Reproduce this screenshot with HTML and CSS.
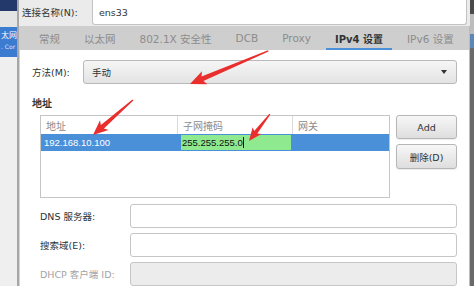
FILE: index.html
```html
<!DOCTYPE html>
<html lang="zh-CN">
<head>
  <meta charset="UTF-8">
  <meta name="viewport" content="width=device-width, initial-scale=1.0">
  <title>编辑 ens33</title>
  <link rel="stylesheet" href="styles.css">
</head>
<body>

  <div class="screen">
      <div class="side-left">
          <div class="side-top"></div>
          <div class="side-gap"></div>
          <div class="side-item">
              <span class="side-title">太网</span>
              <span class="side-sub">. Cor</span>
          </div>
      </div>

      <div class="dialog">
          <div class="name-row">
              <label class="name-label">连接名称(N):</label>
              <div class="name-entry">ens33</div>
          </div>

          <div class="tabs">
              <span class="tab">常规</span>
              <span class="tab">以太网</span>
              <span class="tab">802.1X 安全性</span>
              <span class="tab">DCB</span>
              <span class="tab">Proxy</span>
              <span class="tab active">IPv4 设置</span>
              <span class="tab">IPv6 设置</span>
          </div>

          <div class="page">
              <div class="method-row">
                  <label class="method-label">方法(M):</label>
                  <div class="combo">
                      <span>手动</span>
                      <span class="combo-caret"></span>
                  </div>
              </div>

              <div class="section-title">地址</div>

              <div class="addr-block">
                  <div class="addr-table">
                      <div class="addr-head">
                          <div class="col col1">地址</div>
                          <div class="col col2">子网掩码</div>
                          <div class="col col3">网关</div>
                      </div>
                      <div class="addr-row selected">
                          <div class="col col1">192.168.10.100</div>
                          <div class="col col2"><span class="cell-edit">255.255.255.0<span class="caret"></span></span></div>
                          <div class="col col3"></div>
                      </div>
                  </div>
                  <div class="addr-buttons">
                      <button type="button" class="btn">Add</button>
                      <button type="button" class="btn btn-tall">删除(D)</button>
                  </div>
              </div>

              <div class="form-rows">
                  <div class="form-row">
                      <label>DNS 服务器:</label>
                      <div class="entry"></div>
                  </div>
                  <div class="form-row">
                      <label>搜索域(E):</label>
                      <div class="entry"></div>
                  </div>
                  <div class="form-row">
                      <label class="disabled">DHCP 客户端 ID:</label>
                      <div class="entry disabled"></div>
                  </div>
              </div>
          </div>
      </div>

      <div class="side-right">
          <div class="sr-dark"></div>
          <div class="sr-light"></div>
          <div class="sr-blue"></div>
          <div class="sr-rest"></div>
      </div>

      <!-- red annotation arrows drawn over the dialog -->
      <svg class="arrows" width="474" height="286" viewBox="0 0 474 286">
          <g fill="#ea2e2e">
              <polygon transform="translate(190 84) rotate(-22.9)" points="0,0 16,-7 13.5,-2.4 85,-0.7 85,0.7 13.5,2.4 16,7"/>
              <polygon transform="translate(93 135) rotate(-41.2)" points="0,0 15,-6.5 12.5,-2.3 53,-0.7 53,0.7 12.5,2.3 15,6.5"/>
              <polygon transform="translate(249 141) rotate(-52.1)" points="0,0 13,-5.5 11,-2 34,-0.6 34,0.6 11,2 13,5.5"/>
          </g>
      </svg>
  </div>

</body>
</html>
```

FILE: styles.css
```css
* {
  box-sizing: border-box;
}

body {
  margin: 0;
  width: 474px;
  height: 286px;
  overflow: hidden;
  font-family: "DejaVu Sans", "Noto Sans CJK SC", sans-serif;
  font-size: 9.5px;
  color: #2e3436;
  background: #efefef;
}

.screen {
  position: relative;
  display: flex;
  height: 286px;
}

/* window list behind the dialog */
.side-left {
  width: 17px;
  display: flex;
  flex-direction: column;
  background: #efefef;
  overflow: hidden;
}

.side-top {
  height: 11px;
  background: #23396b;
}

.side-gap {
  height: 16px;
  background: #e4e4e4;
}

.side-item {
  height: 30px;
  background: #3b7bd0;
  color: #fff;
  display: flex;
  flex-direction: column;
  padding-top: 2px;
}

.side-title {
  font-size: 8px;
  line-height: 13px;
  white-space: nowrap;
  padding-left: 1px;
}

.side-sub {
  font-size: 6px;
  line-height: 10px;
  white-space: nowrap;
  padding-left: 1px;
  color: #d8e6f8;
}

.side-right {
  width: 4px;
  display: flex;
  flex-direction: column;
  background: #5c5c5c;
}

.sr-dark {
  height: 14px;
  background: #4a4a4a;
}

.sr-light {
  height: 20px;
  background: #bdbdbd;
}

.sr-blue {
  height: 14px;
  background: #5d86b6;
}

.sr-rest {
  flex: 1;
  background: #6a6a6a;
}

/* dialog */
.dialog {
  flex: 1;
  display: flex;
  flex-direction: column;
  border-left: 2px solid #a7a7a7;
  background: #ebebeb;
}

.name-row {
  height: 30px;
  display: flex;
  align-items: flex-start;
  padding: 0 3px 0 3px;
}

.name-label {
  width: 70px;
  line-height: 25px;
}

.name-entry {
  flex: 1;
  height: 25px;
  background: #fff;
  border: 1px solid #c3c3c3;
  border-top: 0;
  border-radius: 0 0 3px 3px;
  padding-left: 6px;
  display: flex;
  align-items: center;
}

.tabs {
  height: 27px;
  background: #cecece;
  display: flex;
  padding-left: 8px;
  border-right: 1px solid #bcbcbc;
}

.tab {
  position: relative;
  padding: 0 12px;
  display: flex;
  align-items: center;
  color: #8c8c8c;
  font-size: 10.5px;
  white-space: nowrap;
}

.tab.active {
  color: #2e3436;
  font-weight: bold;
  font-size: 10px;
}

.tab.active::after {
  content: "";
  position: absolute;
  left: 3px;
  right: 3px;
  bottom: 0;
  height: 2px;
  background: #4a90d9;
}

.page {
  flex: 1;
  background: #fff;
  border-left: 1px solid #d4d4d4;
  border-right: 1px solid #bcbcbc;
  padding: 10px 12px 0 12px;
  display: flex;
  flex-direction: column;
}

.method-row {
  display: flex;
  align-items: center;
  height: 24px;
}

.method-label {
  width: 51px;
}

.combo {
  flex: 1;
  height: 24px;
  border: 1px solid #b9b9b9;
  border-radius: 3px;
  background: linear-gradient(#f6f6f6, #e3e3e3);
  display: flex;
  align-items: center;
  justify-content: space-between;
  padding: 0 9px 0 8px;
}

.combo-caret {
  width: 0;
  height: 0;
  border-left: 3px solid transparent;
  border-right: 3px solid transparent;
  border-top: 4px solid #2e3436;
}

.section-title {
  margin-top: 13px;
  height: 14px;
  line-height: 14px;
  font-size: 10px;
  font-weight: bold;
}

.addr-block {
  display: flex;
  gap: 6px;
  margin-top: 4px;
  padding-left: 8px;
  height: 83px;
}

.addr-table {
  width: 350px;
  border: 1px solid #c5c5c5;
  background: #fff;
}

.addr-head {
  display: flex;
  height: 18px;
  color: #8b8b8b;
  font-size: 10px;
}

.addr-row {
  display: flex;
  height: 17px;
}

.addr-row.selected {
  background: #4a90d9;
  color: #fff;
}

.col {
  display: flex;
  align-items: center;
  white-space: nowrap;
}

.col1 {
  width: 136px;
  padding-left: 5px;
}

.col2 {
  width: 115px;
  padding-left: 5px;
}

.col3 {
  flex: 1;
  padding-left: 5px;
}

.addr-head .col2,
.addr-head .col3 {
  border-left: 1px solid #dadada;
}

.addr-row .col {
  font-family: "Liberation Sans", sans-serif;
  font-size: 9.5px;
}

.addr-row .col1 {
  padding-left: 3px;
}

.addr-row .col2 {
  padding-left: 4px;
}

.cell-edit {
  display: flex;
  align-items: center;
  width: 110px;
  height: 15px;
  padding-left: 1px;
  background: #8fe98f;
  color: #111;
}

.caret {
  width: 1px;
  height: 11px;
  background: #111;
}

.addr-buttons {
  width: 61px;
  display: flex;
  flex-direction: column;
  gap: 5px;
}

.btn {
  height: 24px;
  padding: 0;
  font-family: inherit;
  font-size: 9.5px;
  color: #2e3436;
  border: 1px solid #b6b6b6;
  border-radius: 3px;
  background: linear-gradient(#f7f7f7, #dedede);
  box-shadow: 0 1px 1px rgba(0, 0, 0, 0.08);
}

.btn-tall {
  height: 25px;
}

.form-rows {
  display: flex;
  flex-direction: column;
  gap: 5px;
  margin-top: 6px;
  padding-left: 8px;
}

.form-row {
  display: flex;
  align-items: center;
  height: 24px;
}

.form-row label {
  width: 90px;
  white-space: nowrap;
}

.form-row label.disabled {
  color: #a3a3a3;
}

.entry {
  flex: 1;
  height: 24px;
  border: 1px solid #c6c6c6;
  border-radius: 3px;
  background: #fff;
}

.entry.disabled {
  background: #ececec;
}

.arrows {
  position: absolute;
  left: 0;
  top: 0;
  pointer-events: none;
}
```
